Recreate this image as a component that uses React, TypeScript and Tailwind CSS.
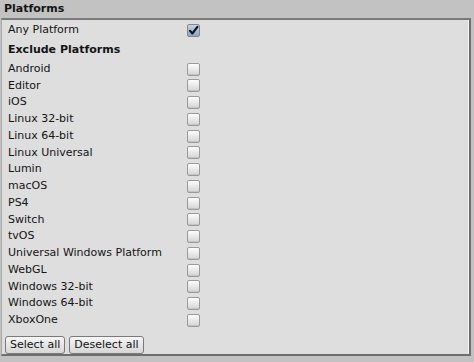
const PLATFORMS = [
  "Android",
  "Editor",
  "iOS",
  "Linux 32-bit",
  "Linux 64-bit",
  "Linux Universal",
  "Lumin",
  "macOS",
  "PS4",
  "Switch",
  "tvOS",
  "Universal Windows Platform",
  "WebGL",
  "Windows 32-bit",
  "Windows 64-bit",
  "XboxOne",
]

function Check({ checked }: { checked?: boolean }) {
  return (
    <div
      className={
        checked
          ? "flex h-[13px] w-[13px] items-center justify-center rounded-[2px] border border-[#7d8899] bg-gradient-to-b from-[#c9d3df] to-[#93a3b8]"
          : "h-[13px] w-[13px] rounded-[2px] border border-[#9a9a9a] bg-gradient-to-b from-[#fdfdfd] to-[#d4d4d4] shadow-[inset_0_-1px_0_#c4c4c4]"
      }
    >
      {checked && (
        <svg width="11" height="11" viewBox="0 0 11 11">
          <path d="M2 5.8 L4.4 8.5 L9.4 1.8" fill="none" stroke="#0d1526" strokeWidth="2.1" strokeLinecap="round" strokeLinejoin="round" />
        </svg>
      )}
    </div>
  )
}

function Row({ label, checked }: { label: string; checked?: boolean }) {
  return (
    <div className="flex h-[16.75px] items-center">
      <span className="w-[185px] pl-[6px]">{label}</span>
      <Check checked={checked} />
    </div>
  )
}

export default function App() {
  return (
    <div className="h-[362px] w-[474px] bg-[#c2c2c2] font-['DejaVu_Sans',sans-serif] text-[11px] text-[#141414]">
      <div className="flex h-[18px] items-center pl-[4px] text-[11px] font-bold">Platforms</div>
      <div className="ml-[1px] w-[470px] border-t-2 border-r-2 border-b-2 border-l border-t-[#7a7a7a] border-r-[#6e6e6e] border-b-[#6e6e6e] border-l-[#a8a8a8] bg-[#dedede] pt-[2px] shadow-[inset_-1px_0_0_#f4f4f4]">
        <Row label="Any Platform" checked />
        <div className="flex h-[22px] items-center pl-[6px] font-bold">Exclude Platforms</div>
        {PLATFORMS.map((p) => (
          <Row key={p} label={p} />
        ))}
        <div className="mt-[7px] flex gap-[4px] pl-[3px]">
          <button className="h-[18px] rounded-[3px] border border-[#7a7a7a] bg-gradient-to-b from-[#f6f6f6] to-[#d6d6d6] px-[4px] text-[11px]">Select all</button>
          <button className="h-[18px] rounded-[3px] border border-[#7a7a7a] bg-gradient-to-b from-[#f6f6f6] to-[#d6d6d6] px-[4px] text-[11px]">Deselect all</button>
        </div>
      </div>
    </div>
  )
}
